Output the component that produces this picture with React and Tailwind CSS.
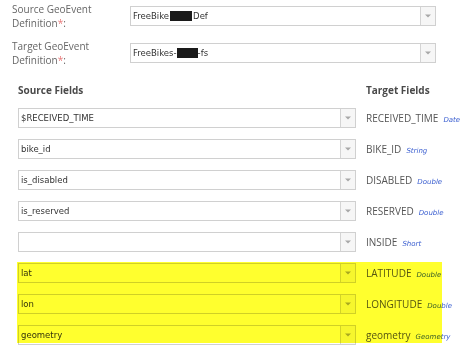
import React from "react";

const sans = { fontFamily: '"Open Sans", "Liberation Sans", sans-serif' };
const verd = { fontFamily: '"DejaVu Sans", Verdana, sans-serif' };

function Arrow() {
  return (
    <div className="flex h-full w-[15px] items-center justify-center border-l border-[#d4d4d4] bg-[#f6f6f6]">
      <svg width="6" height="4" viewBox="0 0 6 4">
        <path d="M0 0.5 L6 0.5 L3 3.5 Z" fill="#a8a8a8" />
      </svg>
    </div>
  );
}

function Select({ children, width }) {
  return (
    <div
      className={`flex h-[20px] items-center border border-[#d0d0d0] bg-white ${width}`}
    >
      <div
        className="flex flex-1 items-center pl-[2px] text-[8.5px] text-[#333] whitespace-nowrap"
        style={verd}
      >
        {children}
      </div>
      <Arrow />
    </div>
  );
}

const rows = [
  ["$RECEIVED_TIME", "RECEIVED_TIME", "Date"],
  ["bike_id", "BIKE_ID", "String"],
  ["is_disabled", "DISABLED", "Double"],
  ["is_reserved", "RESERVED", "Double"],
  ["", "INSIDE", "Short"],
  ["lat", "LATITUDE", "Double"],
  ["lon", "LONGITUDE", "Double"],
  ["geometry", "geometry", "Geometry"],
];

function Label({ first }) {
  return (
    <div
      className="w-[118px] pt-[2px] text-[10px] leading-[14px] text-[#666]"
      style={sans}
    >
      <div>{first} GeoEvent</div>
      <div>
        Definition<span className="text-[#e87878]">*</span>:
      </div>
    </div>
  );
}

export default function App() {
  return (
    <div className="relative h-[364px] w-[474px] overflow-hidden bg-white">
      <div className="flex flex-col pl-[12px]">
        <div className="flex h-[37px]">
          <Label first="Source" />
          <div className="mt-[6px]">
            <Select width="w-[306px]">
              <span>FreeBike</span>
              <span className="mx-[1px] inline-block h-[10px] w-[22px] bg-[#1a1a1a]" />
              <span>Def</span>
            </Select>
          </div>
        </div>
        <div className="flex h-[37px]">
          <Label first="Target" />
          <div className="mt-[6px]">
            <Select width="w-[306px]">
              <span>FreeBikes-</span>
              <span className="inline-block h-[10px] w-[21px] bg-[#1a1a1a]" />
              <span>-fs</span>
            </Select>
          </div>
        </div>
      </div>

      <div className="mt-[9px] flex pl-[18px]">
        <div
          className="w-[348px] text-[10px] font-bold leading-[14px] text-[#4a4a4a]"
          style={sans}
        >
          Source Fields
        </div>
        <div
          className="text-[10px] font-bold leading-[14px] text-[#4a4a4a]"
          style={sans}
        >
          Target Fields
        </div>
      </div>

      <div className="mt-[11px] flex flex-col gap-[11px] pl-[18px]">
        {rows.map(([src, tgt, type], i) => (
          <div key={i} className="flex h-[20px] items-center">
            <Select width="w-[338px]">{src}</Select>
            <div className="ml-[10px] flex items-baseline whitespace-nowrap">
              <span className="text-[10px] text-[#555]" style={sans}>
                {tgt}
              </span>
              <span
                className="ml-[5px] text-[7px] italic text-[#3b5fd0]"
                style={verd}
              >
                {type}
              </span>
            </div>
          </div>
        ))}
      </div>

      <div className="pointer-events-none absolute left-[17px] top-[262px] h-[81px] w-[425px] bg-[#ffff2e] mix-blend-multiply" />
    </div>
  );
}
